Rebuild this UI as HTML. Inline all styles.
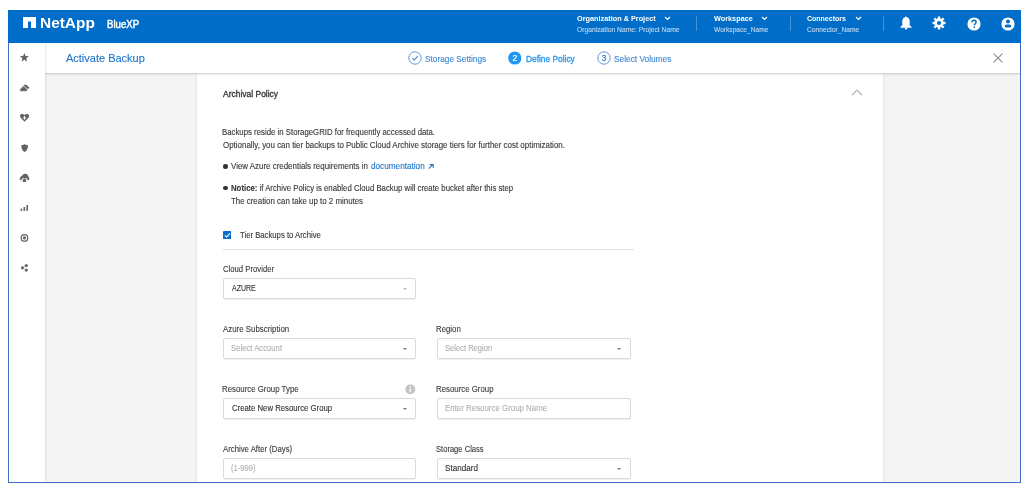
<!DOCTYPE html>
<html><head><meta charset="utf-8">
<style>
*{margin:0;padding:0;box-sizing:border-box}
html,body{width:1033px;height:491px;overflow:hidden;background:#fff;font-family:"Liberation Sans",sans-serif}
.a{position:absolute;white-space:nowrap}
.tx{position:absolute;white-space:nowrap;line-height:1;transform-origin:0 0}
#hdr{left:8px;top:10px;width:1013px;height:33px;background:#006ec9}
#frame{left:8px;top:43px;width:1013px;height:440px;border:1px solid #3e70c9;border-top:none}
#side{left:9px;top:43px;width:36px;height:439px;background:#fff;box-shadow:1px 0 2px rgba(0,0,0,.10)}
#content{left:45px;top:43px;width:975px;height:439px;background:#f4f4f4}
#titlebar{left:45px;top:43px;width:975px;height:30px;background:#fff;box-shadow:0 1px 2px rgba(0,0,0,.2)}
#card{left:197px;top:73px;width:686px;height:409px;background:#fff;box-shadow:1px 0 2px rgba(0,0,0,.07),-1px 0 1px rgba(0,0,0,.05)}
.box{position:absolute;height:21px;border:1px solid #dadada;border-radius:2px;background:#fff;box-shadow:0 1px 1px rgba(0,0,0,.06)}
.caret{position:absolute;width:0;height:0;border-left:2.7px solid transparent;border-right:2.7px solid transparent;border-top:2.6px solid #777}
</style></head><body><div id="wrap" style="position:absolute;left:0;top:0;width:1033px;height:491px;will-change:transform;background:#fff;filter:blur(0.3px)">
<div id="content" class="a"></div>
<div id="card" class="a"></div>
<div id="titlebar" class="a"></div>
<div id="side" class="a"></div>
<div id="frame" class="a"></div>
<div id="hdr" class="a"></div>

<!-- header -->
<svg class="a" style="left:23px;top:17px" width="13" height="11" viewBox="0 0 13 11"><path d="M0 0H13V11H8V4.5H5V11H0Z" fill="#fff"/></svg>
<svg class="a" style="left:664px;top:16px" width="7" height="5" viewBox="0 0 7 5"><path d="M1 1L3.5 3.5L6 1" stroke="#fff" stroke-width="1.2" fill="none"/></svg>
<div class="a" style="left:696px;top:16px;width:1px;height:15px;background:#4a90d6"></div>
<svg class="a" style="left:761px;top:16px" width="7" height="5" viewBox="0 0 7 5"><path d="M1 1L3.5 3.5L6 1" stroke="#fff" stroke-width="1.2" fill="none"/></svg>
<div class="a" style="left:790px;top:16px;width:1px;height:15px;background:#4a90d6"></div>
<svg class="a" style="left:855px;top:16px" width="7" height="5" viewBox="0 0 7 5"><path d="M1 1L3.5 3.5L6 1" stroke="#fff" stroke-width="1.2" fill="none"/></svg>
<div class="a" style="left:883px;top:16px;width:1px;height:15px;background:#4a90d6"></div>

<!-- bell -->
<svg class="a" style="left:899.6px;top:16.3px" width="12" height="14" viewBox="0 0 12 14"><path d="M6 0.5C6.6 0.5 6.9 0.9 6.9 1.3C8.8 1.8 9.7 3.4 9.7 5.6V8.4C9.7 9.5 10.8 10.2 11.6 10.7V11.7H0.4V10.7C1.2 10.2 2.3 9.5 2.3 8.4V5.6C2.3 3.4 3.2 1.8 5.1 1.3C5.1 0.9 5.4 0.5 6 0.5Z" fill="#fff"/><rect x="4.9" y="11.7" width="2.2" height="1.7" fill="#fff"/></svg>
<!-- gear -->
<svg class="a" style="left:932px;top:16px" width="14" height="14" viewBox="-7 -7 14 14"><g fill="#fff"><circle r="4.7"/><g id="tooth"><rect x="-1.2" y="-6.5" width="2.4" height="3"/></g><use href="#tooth" transform="rotate(45)"/><use href="#tooth" transform="rotate(90)"/><use href="#tooth" transform="rotate(135)"/><use href="#tooth" transform="rotate(180)"/><use href="#tooth" transform="rotate(225)"/><use href="#tooth" transform="rotate(270)"/><use href="#tooth" transform="rotate(315)"/></g><circle r="2.1" fill="#006ec9"/></svg>
<!-- help -->
<svg class="a" style="left:966.6px;top:16.6px" width="14" height="14" viewBox="0 0 14 14"><circle cx="7" cy="7" r="6.6" fill="#fff"/><path d="M4.9 5.3C4.9 4 5.9 3.3 7 3.3C8.2 3.3 9.1 4 9.1 5.2C9.1 6.6 7.4 6.8 7.4 8.2" stroke="#006ec9" stroke-width="1.5" fill="none"/><rect x="6.6" y="9.4" width="1.5" height="1.5" fill="#006ec9"/></svg>
<!-- user -->
<svg class="a" style="left:1000.9px;top:16.6px" width="14" height="14" viewBox="0 0 14 14"><circle cx="7" cy="7" r="6.6" fill="#fff"/><circle cx="7" cy="4.5" r="1.95" fill="#006ec9"/><path d="M3.7 9.1C3.7 8 5.2 7.6 7 7.6C8.8 7.6 10.3 8 10.3 9.1C10.3 10.2 8.8 10.6 7 10.6C5.2 10.6 3.7 10.2 3.7 9.1Z" fill="#006ec9"/></svg>

<!-- sidebar icons -->
<svg class="a" style="left:9px;top:43px" width="36" height="240" viewBox="9 43 36 240">
<g fill="#636363">
<path d="M24.35 52.9L25.55 56.1L28.9 56.2L26.3 58.3L27.2 61.5L24.35 59.7L21.5 61.5L22.4 58.3L19.8 56.2L23.15 56.1Z"/>
<path d="M23.3 88.8C22.4 88.8 21.9 88.1 21.9 87.4C21.9 86.6 22.5 86 23.2 85.9C23.6 85.2 24.4 84.8 25.4 84.8C26.5 84.8 27.3 85.4 27.6 86.2C28.5 86.3 29.2 86.9 29.2 87.7C29.2 88.3 28.7 88.8 28 88.8Z"/>
<path d="M21.2 91.4C20.3 91.4 19.7 90.7 19.7 89.9C19.7 89.1 20.3 88.5 21 88.3C21.4 87.3 22.4 86.5 23.5 86.5C24.7 86.5 25.6 87.2 25.9 88.2C26.8 88.3 27.5 89 27.5 89.8C27.5 90.7 26.8 91.4 26 91.4Z" stroke="#fff" stroke-width="0.7"/>
<path d="M24.55 121.7L20.9 118.1C19.6 116.8 19.8 115 20.9 114.3C22.1 113.5 23.6 113.9 24.55 115C25.5 113.9 27 113.5 28.2 114.3C29.3 115 29.5 116.8 28.2 118.1Z"/>
<path d="M24.6 144.2C25.8 144.9 26.9 145.2 28 145.2C28 148.6 26.9 150.8 24.6 151.9C22.3 150.8 21.3 148.6 21.3 145.2C22.4 145.2 23.5 144.9 24.6 144.2Z"/>
<path d="M19.8 180.3C19.5 177.7 20.9 176 22.5 175.3C23.2 174.2 24.2 173.7 25.3 173.8C26.8 173.9 28 175 28.3 176.4C29.1 177 29.4 178.2 29.2 179.2L29 180.3Z"/>
<path d="M21.2 181.2A3.25 3.25 0 0 1 27.7 181.2Z" fill="#fff"/>
<path d="M22.8 182V179.7L24.45 178L26.1 179.7V182Z"/>
<rect x="20.6" y="208.6" width="1.6" height="2.3"/>
<rect x="23.5" y="207.0" width="1.6" height="3.9"/>
<rect x="26.4" y="205.0" width="1.6" height="5.9"/>
<circle cx="24.45" cy="237.9" r="1.6"/>
<circle cx="22.5" cy="267.8" r="1.6"/>
<circle cx="26.3" cy="265.5" r="1.6"/>
<circle cx="26.3" cy="270.1" r="1.6"/>
</g>
<path d="M24.55 115.8L25.9 117.8L24.55 119.9L23.2 117.8Z" fill="#fff"/>
<circle cx="24.45" cy="237.9" r="3.3" stroke="#636363" stroke-width="1.2" fill="none"/>
<path d="M22.5 267.8L26.3 265.5M22.5 267.8L26.3 270.1" stroke="#888" stroke-width=".6"/>
</svg>

<!-- title bar -->
<svg class="a" style="left:408px;top:51px" width="14" height="14" viewBox="0 0 14 14"><circle cx="7" cy="7" r="6.2" stroke="#5a9ade" stroke-width="1" fill="none"/><path d="M4.3 7.2L6.2 9L9.7 5.2" stroke="#3d85d3" stroke-width="1.1" fill="none"/></svg>
<svg class="a" style="left:508px;top:51.3px" width="14" height="14" viewBox="0 0 14 14"><circle cx="6.8" cy="7" r="6.6" fill="#2196f3"/><text x="6.8" y="10.2" text-anchor="middle" font-family="Liberation Sans" font-size="8.5" font-weight="normal" stroke="#fff" stroke-width="0.15" fill="#fff">2</text></svg>
<svg class="a" style="left:596.5px;top:51px" width="14" height="14" viewBox="0 0 14 14"><circle cx="7" cy="7" r="6.2" stroke="#5a9ade" stroke-width="1" fill="none"/><text x="7" y="10.2" text-anchor="middle" font-family="Liberation Sans" font-size="8.3" stroke="#3d85d3" stroke-width="0.3" fill="#3d85d3">3</text></svg>
<svg class="a" style="left:993px;top:53px" width="10" height="10" viewBox="0 0 10 10"><path d="M0.6 0.6L9.4 9.4M9.4 0.6L0.6 9.4" stroke="#909090" stroke-width="1.25"/></svg>

<!-- card -->
<svg class="a" style="left:851px;top:89px" width="12" height="7" viewBox="0 0 12 7"><path d="M1 6L6 1.2L11 6" stroke="#aaa" stroke-width="1.15" fill="none"/></svg>
<div class="a" style="left:223px;top:164.2px;width:4.5px;height:4.5px;border-radius:50%;background:#333"></div>
<svg class="a" style="left:428.2px;top:164.2px" width="6" height="5" viewBox="0 0 6 5"><path d="M0.7 4.6L4.8 0.7M1.6 0.6H5.2V4.1" stroke="#2075c9" stroke-width="1.05" fill="none"/></svg>
<div class="a" style="left:223px;top:185.5px;width:4.5px;height:4.5px;border-radius:50%;background:#333"></div>
<svg class="a" style="left:222.9px;top:230.6px" width="8.6" height="8.6" viewBox="0 0 9 9"><rect x="0" y="0" width="9" height="9" rx="1" fill="#106fce"/><path d="M2 4.6L3.8 6.3L7.2 2.6" stroke="#fff" stroke-width="1.2" fill="none"/></svg>
<div class="a" style="left:223px;top:249px;width:411px;height:1px;background:#e0e0e0"></div>

<div class="box" style="left:223px;top:278px;width:193px"></div>
<div class="caret" style="left:402.5px;top:288px;border-top-color:#bbb"></div>
<div class="box" style="left:223px;top:338px;width:193px"></div>
<div class="caret" style="left:402.5px;top:348px"></div>
<div class="box" style="left:437px;top:338px;width:193.5px"></div>
<div class="caret" style="left:617px;top:348px"></div>
<svg class="a" style="left:405.3px;top:383.9px" width="11" height="11" viewBox="0 0 11 11"><circle cx="5.3" cy="5.3" r="4.9" fill="#c2c2c2"/><rect x="4.65" y="4.3" width="1.3" height="3.9" fill="#fff"/><circle cx="5.3" cy="2.75" r=".75" fill="#fff"/></svg>
<div class="box" style="left:223px;top:398px;width:193px"></div>
<div class="caret" style="left:402.5px;top:408px"></div>
<div class="box" style="left:437px;top:398px;width:193.5px"></div>
<div class="box" style="left:223px;top:458px;width:193px"></div>
<div class="box" style="left:437px;top:458px;width:193.5px"></div>
<div class="caret" style="left:617px;top:468px"></div>
<div id="netapp" class="tx" style="left:39.73px;top:15.70px;font-size:14.6px;font-weight:bold;color:#fff;transform:scaleX(1.0561);">NetApp</div>
<div id="bluexp" class="tx" style="left:107.40px;top:19.60px;font-size:10.0px;font-weight:normal;color:#fff;transform:scaleX(0.9606);-webkit-text-stroke-width:0.45px;">BlueXP</div>
<div id="org" class="tx" style="left:576.60px;top:15.11px;font-size:7.2px;font-weight:bold;color:#fff;transform:scaleX(1.0156);">Organization &amp; Project</div>
<div id="orgsub" class="tx" style="left:576.60px;top:27.00px;font-size:6.8px;font-weight:normal;color:#bcd6f0;transform:scaleX(0.9903);-webkit-text-stroke-width:0.12px;">Organization Name: Project Name</div>
<div id="ws" class="tx" style="left:714.20px;top:15.11px;font-size:7.2px;font-weight:bold;color:#fff;transform:scaleX(1.0159);">Workspace</div>
<div id="wssub" class="tx" style="left:714.20px;top:27.00px;font-size:6.8px;font-weight:normal;color:#bcd6f0;transform:scaleX(0.9747);-webkit-text-stroke-width:0.12px;">Workspace_Name</div>
<div id="con" class="tx" style="left:807.39px;top:15.11px;font-size:7.2px;font-weight:bold;color:#fff;transform:scaleX(0.9727);">Connectors</div>
<div id="consub" class="tx" style="left:807.00px;top:27.00px;font-size:6.8px;font-weight:normal;color:#bcd6f0;transform:scaleX(0.9811);-webkit-text-stroke-width:0.12px;">Connector_Name</div>
<div id="title" class="tx" style="left:66.21px;top:53.20px;font-size:10.6px;font-weight:normal;color:#2075c9;transform:scaleX(1.0369);-webkit-text-stroke-width:0.12px;">Activate Backup</div>
<div id="s1" class="tx" style="left:424.61px;top:54.81px;font-size:8.4px;font-weight:normal;color:#3f88d6;transform:scaleX(0.9885);-webkit-text-stroke-width:0.12px;">Storage Settings</div>
<div id="s2" class="tx" style="left:526.00px;top:54.81px;font-size:8.4px;font-weight:normal;color:#2196f3;transform:scaleX(0.9981);-webkit-text-stroke-width:0.3px;">Define Policy</div>
<div id="s3" class="tx" style="left:614.20px;top:54.81px;font-size:8.4px;font-weight:normal;color:#3f88d6;transform:scaleX(0.9930);-webkit-text-stroke-width:0.12px;">Select Volumes</div>
<div id="arch" class="tx" style="left:223.40px;top:90.00px;font-size:8.6px;font-weight:normal;color:#333;transform:scaleX(0.9858);-webkit-text-stroke-width:0.3px;">Archival Policy</div>
<div id="l1" class="tx" style="left:222.20px;top:129.20px;font-size:8.2px;font-weight:normal;color:#383838;transform:scaleX(0.9534);-webkit-text-stroke-width:0.12px;">Backups reside in StorageGRID for frequently accessed data.</div>
<div id="l2" class="tx" style="left:223.21px;top:142.41px;font-size:8.2px;font-weight:normal;color:#383838;transform:scaleX(0.9699);-webkit-text-stroke-width:0.12px;">Optionally, you can tier backups to Public Cloud Archive storage tiers for further cost optimization.</div>
<div id="l3" class="tx" style="left:231.01px;top:163.41px;font-size:8.2px;font-weight:normal;color:#383838;transform:scaleX(0.9679);-webkit-text-stroke-width:0.12px;">View Azure credentials requirements in</div>
<div id="doc" class="tx" style="left:371.00px;top:163.41px;font-size:8.2px;font-weight:normal;color:#2075c9;transform:scaleX(1.0000);-webkit-text-stroke-width:0.12px;">documentation</div>
<div id="notice" class="tx" style="left:231.02px;top:185.20px;font-size:8.2px;font-weight:normal;color:#383838;transform:scaleX(0.9510);-webkit-text-stroke-width:0.12px;"><b>Notice:</b> if Archive Policy is enabled Cloud Backup will create bucket after this step</div>
<div id="l5" class="tx" style="left:231.01px;top:197.70px;font-size:8.2px;font-weight:normal;color:#383838;transform:scaleX(0.9640);-webkit-text-stroke-width:0.12px;">The creation can take up to 2 minutes</div>
<div id="tier" class="tx" style="left:240.18px;top:232.10px;font-size:8.2px;font-weight:normal;color:#383838;transform:scaleX(0.9431);-webkit-text-stroke-width:0.12px;">Tier Backups to Archive</div>
<div id="lb1" class="tx" style="left:223.39px;top:266.41px;font-size:8.2px;font-weight:normal;color:#3c3c3c;transform:scaleX(0.9427);-webkit-text-stroke-width:0.12px;">Cloud Provider</div>
<div id="v1" class="tx" style="left:231.69px;top:284.91px;font-size:8.2px;font-weight:normal;color:#333;transform:scaleX(0.8519);-webkit-text-stroke-width:0.12px;">AZURE</div>
<div id="lb2" class="tx" style="left:223.40px;top:326.41px;font-size:8.2px;font-weight:normal;color:#3c3c3c;transform:scaleX(0.9633);-webkit-text-stroke-width:0.12px;">Azure Subscription</div>
<div id="v2" class="tx" style="left:230.81px;top:345.41px;font-size:8.2px;font-weight:normal;color:#b0b0b0;transform:scaleX(0.9427);-webkit-text-stroke-width:0.12px;">Select Account</div>
<div id="lb3" class="tx" style="left:436.03px;top:326.41px;font-size:8.2px;font-weight:normal;color:#3c3c3c;transform:scaleX(0.9525);-webkit-text-stroke-width:0.12px;">Region</div>
<div id="v3" class="tx" style="left:444.68px;top:345.41px;font-size:8.2px;font-weight:normal;color:#b0b0b0;transform:scaleX(0.9248);-webkit-text-stroke-width:0.12px;">Select Region</div>
<div id="lb4" class="tx" style="left:222.44px;top:386.41px;font-size:8.2px;font-weight:normal;color:#3c3c3c;transform:scaleX(0.9584);-webkit-text-stroke-width:0.12px;">Resource Group Type</div>
<div id="v4" class="tx" style="left:231.82px;top:405.41px;font-size:8.2px;font-weight:normal;color:#333;transform:scaleX(0.9486);-webkit-text-stroke-width:0.12px;">Create New Resource Group</div>
<div id="lb5" class="tx" style="left:436.03px;top:386.41px;font-size:8.2px;font-weight:normal;color:#3c3c3c;transform:scaleX(0.9577);-webkit-text-stroke-width:0.12px;">Resource Group</div>
<div id="v5" class="tx" style="left:444.64px;top:405.31px;font-size:8.2px;font-weight:normal;color:#b0b0b0;transform:scaleX(0.9635);-webkit-text-stroke-width:0.12px;">Enter Resource Group Name</div>
<div id="lb6" class="tx" style="left:223.40px;top:446.41px;font-size:8.2px;font-weight:normal;color:#3c3c3c;transform:scaleX(0.9496);-webkit-text-stroke-width:0.12px;">Archive After (Days)</div>
<div id="v6" class="tx" style="left:231.23px;top:465.31px;font-size:8.2px;font-weight:normal;color:#b0b0b0;transform:scaleX(0.9297);-webkit-text-stroke-width:0.12px;">(1-999)</div>
<div id="lb7" class="tx" style="left:436.03px;top:446.41px;font-size:8.2px;font-weight:normal;color:#3c3c3c;transform:scaleX(0.9261);-webkit-text-stroke-width:0.12px;">Storage Class</div>
<div id="v7" class="tx" style="left:444.61px;top:465.41px;font-size:8.2px;font-weight:normal;color:#333;transform:scaleX(0.9907);-webkit-text-stroke-width:0.12px;">Standard</div>
</div></body></html>
